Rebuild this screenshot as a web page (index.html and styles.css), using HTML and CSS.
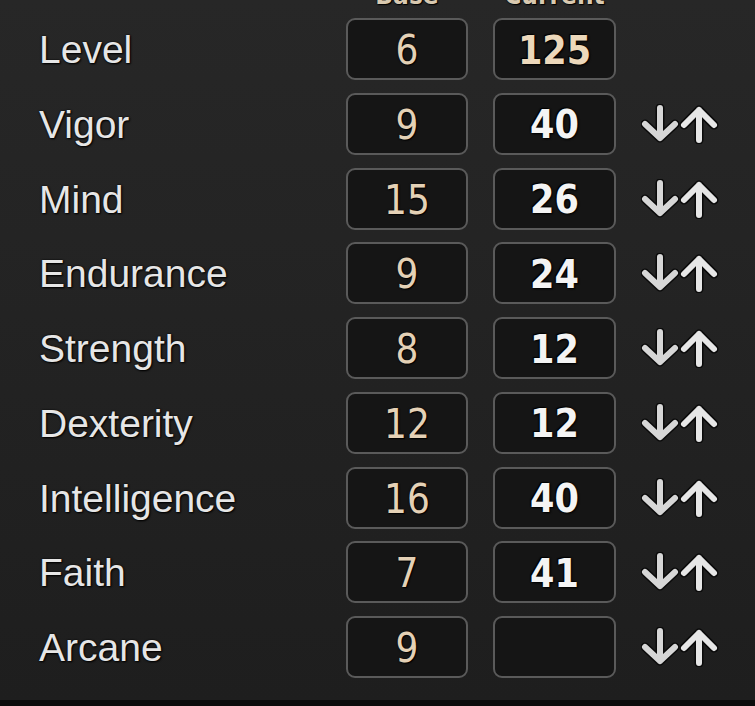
FILE: index.html
```html
<!DOCTYPE html>
<html>
<head>
<meta charset="utf-8">
<link rel="stylesheet" href="styles.css">
</head>
<body>
<div class="panel">
  <div class="head">
    <span class="h-label"></span>
    <span class="h-col">Base</span>
    <span class="h-col">Current</span>
  </div>
  <div class="rows">
    <div class="row">
      <span class="label">Level</span>
      <span class="box base">6</span>
      <span class="box cur gold">125</span>
      <span class="arrows"></span>
    </div>
    <div class="row">
      <span class="label">Vigor</span>
      <span class="box base">9</span>
      <span class="box cur">40</span>
      <span class="arrows"><svg class="ic" viewBox="0 0 80 40"><g class="o"><path d="M19 4V34M4 20L19 34L34 20"/><path d="M58 36V6M43 21L58 6L73 21"/></g><g class="dn"><path d="M19 4V34M4 20L19 34L34 20"/></g><g class="up"><path d="M58 36V6M43 21L58 6L73 21"/></g></svg></span>
    </div>
    <div class="row">
      <span class="label">Mind</span>
      <span class="box base">15</span>
      <span class="box cur">26</span>
      <span class="arrows"><svg class="ic" viewBox="0 0 80 40"><g class="o"><path d="M19 4V34M4 20L19 34L34 20"/><path d="M58 36V6M43 21L58 6L73 21"/></g><g class="dn"><path d="M19 4V34M4 20L19 34L34 20"/></g><g class="up"><path d="M58 36V6M43 21L58 6L73 21"/></g></svg></span>
    </div>
    <div class="row">
      <span class="label">Endurance</span>
      <span class="box base">9</span>
      <span class="box cur">24</span>
      <span class="arrows"><svg class="ic" viewBox="0 0 80 40"><g class="o"><path d="M19 4V34M4 20L19 34L34 20"/><path d="M58 36V6M43 21L58 6L73 21"/></g><g class="dn"><path d="M19 4V34M4 20L19 34L34 20"/></g><g class="up"><path d="M58 36V6M43 21L58 6L73 21"/></g></svg></span>
    </div>
    <div class="row">
      <span class="label">Strength</span>
      <span class="box base">8</span>
      <span class="box cur">12</span>
      <span class="arrows"><svg class="ic" viewBox="0 0 80 40"><g class="o"><path d="M19 4V34M4 20L19 34L34 20"/><path d="M58 36V6M43 21L58 6L73 21"/></g><g class="dn"><path d="M19 4V34M4 20L19 34L34 20"/></g><g class="up"><path d="M58 36V6M43 21L58 6L73 21"/></g></svg></span>
    </div>
    <div class="row">
      <span class="label">Dexterity</span>
      <span class="box base">12</span>
      <span class="box cur">12</span>
      <span class="arrows"><svg class="ic" viewBox="0 0 80 40"><g class="o"><path d="M19 4V34M4 20L19 34L34 20"/><path d="M58 36V6M43 21L58 6L73 21"/></g><g class="dn"><path d="M19 4V34M4 20L19 34L34 20"/></g><g class="up"><path d="M58 36V6M43 21L58 6L73 21"/></g></svg></span>
    </div>
    <div class="row">
      <span class="label">Intelligence</span>
      <span class="box base">16</span>
      <span class="box cur">40</span>
      <span class="arrows"><svg class="ic" viewBox="0 0 80 40"><g class="o"><path d="M19 4V34M4 20L19 34L34 20"/><path d="M58 36V6M43 21L58 6L73 21"/></g><g class="dn"><path d="M19 4V34M4 20L19 34L34 20"/></g><g class="up"><path d="M58 36V6M43 21L58 6L73 21"/></g></svg></span>
    </div>
    <div class="row">
      <span class="label">Faith</span>
      <span class="box base">7</span>
      <span class="box cur">41</span>
      <span class="arrows"><svg class="ic" viewBox="0 0 80 40"><g class="o"><path d="M19 4V34M4 20L19 34L34 20"/><path d="M58 36V6M43 21L58 6L73 21"/></g><g class="dn"><path d="M19 4V34M4 20L19 34L34 20"/></g><g class="up"><path d="M58 36V6M43 21L58 6L73 21"/></g></svg></span>
    </div>
    <div class="row">
      <span class="label">Arcane</span>
      <span class="box base">9</span>
      <span class="box cur"></span>
      <span class="arrows"><svg class="ic" viewBox="0 0 80 40"><g class="o"><path d="M19 4V34M4 20L19 34L34 20"/><path d="M58 36V6M43 21L58 6L73 21"/></g><g class="dn"><path d="M19 4V34M4 20L19 34L34 20"/></g><g class="up"><path d="M58 36V6M43 21L58 6L73 21"/></g></svg></span>
    </div>
  </div>
</div>
</body>
</html>
```
FILE: styles.css
```css
html, body {
  margin: 0;
  padding: 0;
  height: 100%;
}
body {
  background: #0c0c0c;
  overflow: hidden;
}
.panel {
  height: 700px;
  background: linear-gradient(180deg, #272727 0%, #232323 45%, #1e1e1e 100%);
  padding-left: 39px;
  box-sizing: border-box;
}
.head {
  display: grid;
  grid-template-columns: 282px 122px 123px;
  column-gap: 25px;
  height: 17px;
  align-items: start;
  overflow: hidden;
}
.h-col {
  font-family: "DejaVu Sans Condensed", "DejaVu Sans", sans-serif;
  font-weight: bold;
  font-size: 26px;
  line-height: 26px;
  color: #d9c9b0;
  text-align: center;
  margin-top: -18px;
  text-shadow: 0 0 2px #000, 1px 1px 1px #000;
}
.rows {
  display: flex;
  flex-direction: column;
  gap: 12.75px;
}
.row {
  display: grid;
  grid-template-columns: 282px 122px 123px 80px;
  column-gap: 25px;
  height: 62px;
  align-items: center;
}
.label {
  font-family: "Liberation Sans", Arial, sans-serif;
  font-size: 39px;
  color: #e6e6e6;
  text-shadow: 0 0 2px #000, 1px 1px 2px #000;
  line-height: 62px;
  padding-top: 2px;
}
.box {
  box-sizing: border-box;
  height: 62px;
  border: 2px solid #5a5a5a;
  border-radius: 9px;
  background: #151515;
  display: flex;
  align-items: center;
  justify-content: center;
  font-family: "DejaVu Sans Condensed", "DejaVu Sans", sans-serif;
  line-height: 1;
  padding-top: 2px;
}
.base {
  font-size: 40px;
  color: #e4d1b6;
  text-shadow: 0 0 2px #000, 1px 1px 1px #000;
}
.cur {
  font-size: 39px;
  font-weight: bold;
  color: #f4f4f4;
  text-shadow: 0 0 2px #000, 1px 1px 2px #000, -1px -1px 1px #000;
}
.cur.gold {
  color: #ecd8bb;
}
.arrows {
  display: flex;
  align-items: center;
  height: 62px;
}
.ic {
  width: 80px;
  height: 40px;
  display: block;
}
.ic path {
  fill: none;
  stroke-linecap: round;
  stroke-linejoin: round;
}
.ic .o path {
  stroke: #0a0a0a;
  stroke-width: 9;
}
.ic .dn path {
  stroke: #d6d6d6;
  stroke-width: 6;
}
.ic .up path {
  stroke: #e6e6e6;
  stroke-width: 6;
}
```
